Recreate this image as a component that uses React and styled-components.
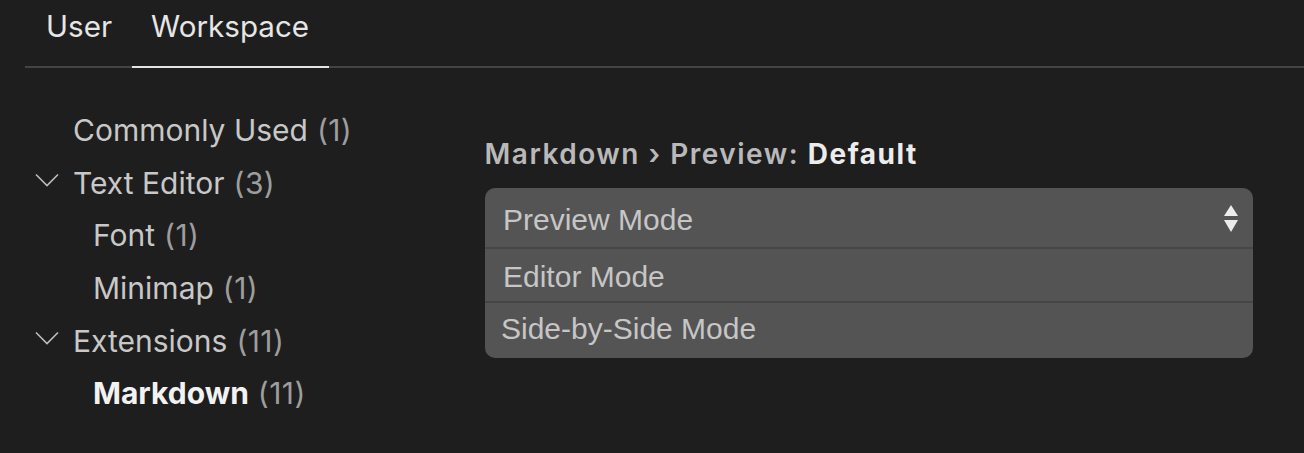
import React from 'react'
import styled, { createGlobalStyle } from 'styled-components'

const Global = createGlobalStyle`
  html, body {
    margin: 0;
    padding: 0;
    background: #1e1e1e;
  }
  body {
    font-family: Inter, "Noto Sans", sans-serif;
    width: 1304px;
    height: 453px;
    overflow: hidden;
  }
`

const Page = styled.div`
  width: 1304px;
  height: 453px;
  background: #1e1e1e;
  color: #cccccc;
`

const Tabs = styled.div`
  display: flex;
  margin-left: 25px;
  padding-left: 1.5px;
  height: 66px;
  border-bottom: 2px solid #444444;
`

const Tab = styled.div`
  box-sizing: border-box;
  height: 68px;
  padding: 12px 19.5px 0;
  font-size: 29.6px;
  line-height: 1;
  color: #e6e6e6;
  border-bottom: 2px solid ${p => (p.$active ? '#e4e4e4' : 'transparent')};
`

const Main = styled.div`
  display: grid;
  grid-template-columns: 484.5px 1fr;
  padding-right: 51px;
`

const Toc = styled.ul`
  list-style: none;
  margin: 0;
  padding: 35.5px 0 0 0;
`

const TocRow = styled.li`
  display: flex;
  align-items: center;
  height: 52.7px;
  padding-left: ${p => (p.$depth === 2 ? '93px' : '35px')};
  font-size: 30px;
  white-space: nowrap;
  color: ${p => (p.$selected ? '#f2f2f2' : '#c8c8c8')};
`

const Twisty = styled.span`
  display: inline-flex;
  width: 38px;
  margin-top: -6px;
  visibility: ${p => (p.$hidden ? 'hidden' : 'visible')};
`

const Label = styled.span`
  font-weight: ${p => (p.$bold ? 700 : 400)};
  margin-right: 9px;
`

const Count = styled.span`
  color: #9d9d9d;
  font-weight: 400;
  letter-spacing: 0.4px;
`

const Content = styled.div`
  padding-top: 67.5px;
`

const Heading = styled.div`
  font-size: 28px;
  line-height: 36px;
  font-weight: 600;
  letter-spacing: 1.5px;
  color: #b9b9b9;
  white-space: nowrap;

  b {
    color: #ececec;
    font-weight: 700;
  }
`

const Select = styled.div`
  position: relative;
  margin-top: 16.5px;
  margin-left: 0.5px;
  background: #545454;
  border-radius: 10px;
  overflow: hidden;
  font-family: "Liberation Sans", Arial, sans-serif;
  font-size: 30px;
  line-height: 1;
  color: #c6c6c6;
`

const Option = styled.div`
  box-sizing: border-box;
  height: ${p => p.$h}px;
  padding-top: ${p => p.$pt}px;
  padding-left: ${p => p.$pl || 18}px;
  border-top: ${p => (p.$divider ? '2px solid #464646' : 'none')};
  white-space: nowrap;
`

const Arrows = styled.svg`
  position: absolute;
  right: 15px;
  top: 17px;
`

const Chevron = () => (
  <svg width="24" height="14" viewBox="0 0 24 14" fill="none">
    <path d="M1 1.5 L12 12.5 L23 1.5" stroke="#bdbdbd" strokeWidth="1.6" />
  </svg>
)

const toc = [
  { label: 'Commonly Used', count: 1, depth: 1, twisty: false },
  { label: 'Text Editor', count: 3, depth: 1, twisty: true },
  { label: 'Font', count: 1, depth: 2 },
  { label: 'Minimap', count: 1, depth: 2 },
  { label: 'Extensions', count: 11, depth: 1, twisty: true },
  { label: 'Markdown', count: 11, depth: 2, selected: true },
]

const App = () => {
  return (
    <Page>
      <Global />
      <Tabs>
        <Tab>User</Tab>
        <Tab $active>Workspace</Tab>
      </Tabs>
      <Main>
        <Toc>
          {toc.map(item => (
            <TocRow key={item.label} $depth={item.depth} $selected={item.selected}>
              {item.depth === 1 && (
                <Twisty $hidden={!item.twisty}>
                  <Chevron />
                </Twisty>
              )}
              <Label $bold={item.selected}>{item.label}</Label>
              <Count>({item.count})</Count>
            </TocRow>
          ))}
        </Toc>
        <Content>
          <Heading>
            Markdown › Preview: <b>Default</b>
          </Heading>
          <Select>
            <Option $h={59} $pt={16.6}>Preview Mode</Option>
            <Option $h={54} $pt={12.6} $divider>Editor Mode</Option>
            <Option $h={57} $pt={10.9} $pl={16} $divider>Side-by-Side Mode</Option>
            <Arrows width="14" height="28" viewBox="0 0 14 28">
              <path d="M7 0 L14 11 L0 11 Z" fill="#ececec" />
              <path d="M0 15 L14 15 L7 27 Z" fill="#ececec" />
            </Arrows>
          </Select>
        </Content>
      </Main>
    </Page>
  )
}

export default App
